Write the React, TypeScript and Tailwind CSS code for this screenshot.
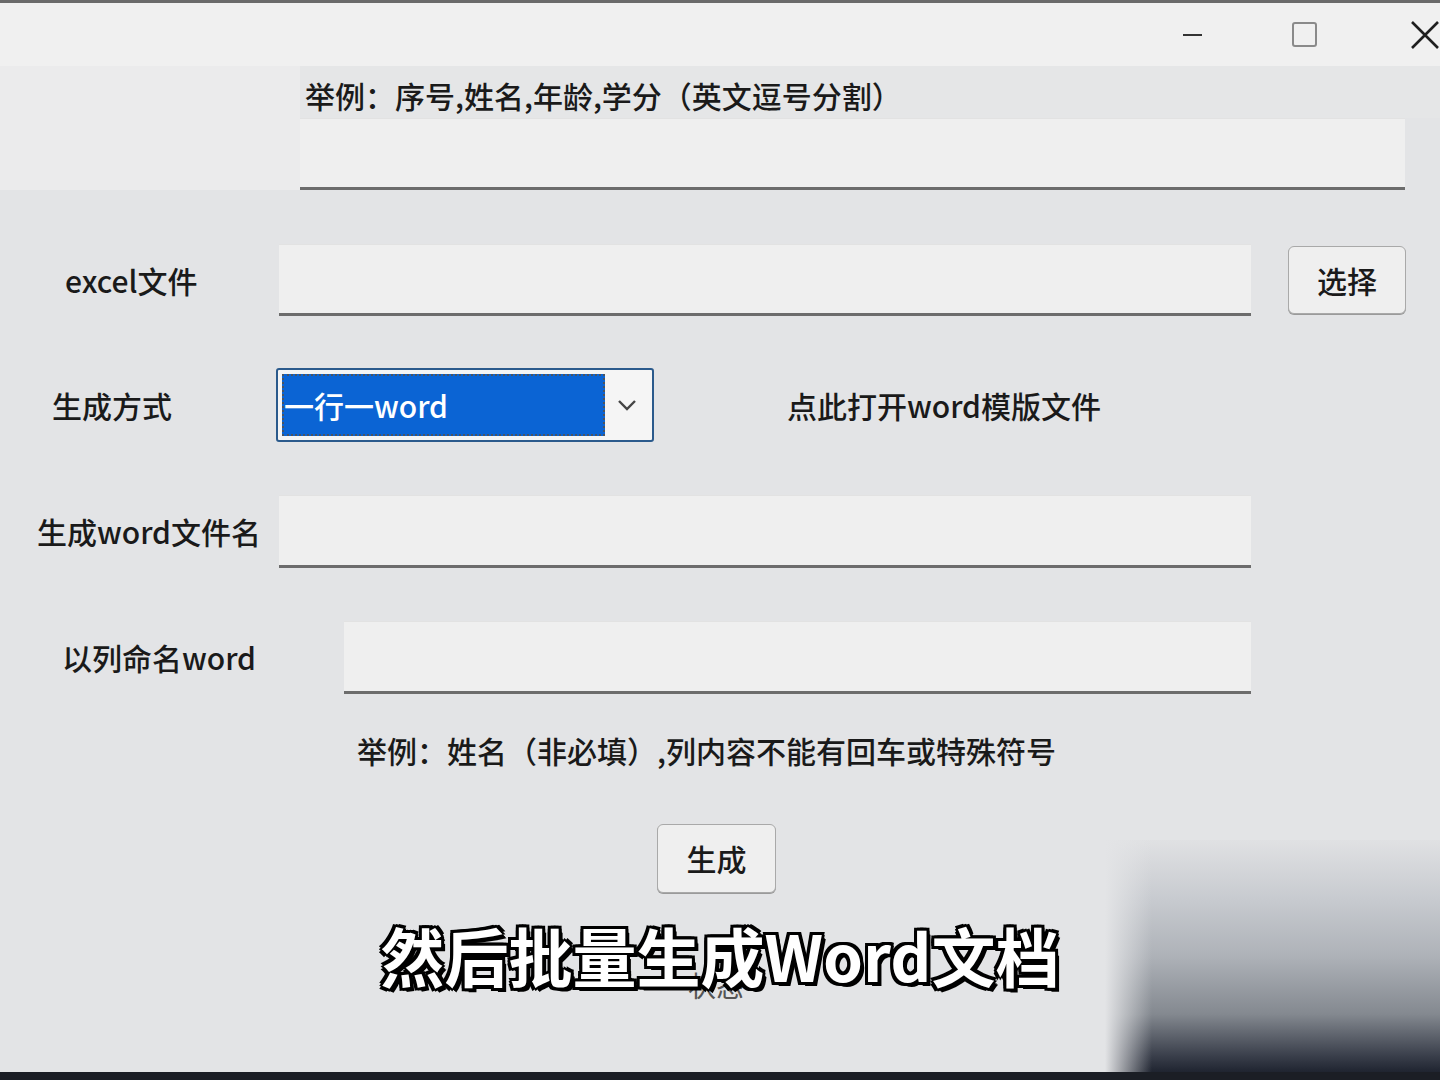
import React from "react";

const Field = ({ width }: { width: string }) => (
  <div
    className={`${width} h-full bg-[#efefef] border-t border-t-[#e2e2e2] border-b-[3px] border-b-[#6c6c6c]`}
  />
);

const App = () => {
  return (
    <div className="relative w-[1440px] h-[1080px] overflow-hidden flex flex-col bg-[#e3e4e6] text-[#1a1a1a] font-['Noto_Sans_CJK_SC','Noto_Sans',sans-serif]">
      {/* top edge */}
      <div className="h-[3px] bg-[#6a6a6a]" />

      {/* title bar */}
      <div className="h-[63px] bg-[#f0f0f0] flex items-center pl-[1183px]">
        <div className="w-[27px] h-[2px] bg-[#333]" />
        <div className="ml-[90px] w-[25px] h-[25px] shrink-0 border-2 border-[#8a8a8a] rounded-[3px]" />
        <svg
          className="ml-[93px] shrink-0"
          width="30"
          height="30"
          viewBox="0 0 30 30"
          fill="none"
        >
          <path d="M2 2L28 28M28 2L2 28" stroke="#1e1e1e" strokeWidth="2.6" />
        </svg>
      </div>

      {/* example + header field */}
      <div className="flex h-[124px]">
        <div className="w-[300px] bg-[#ebebec]" />
        <div className="flex-1 flex flex-col">
          <div className="h-[52px] flex items-center pl-[5px] pt-[6px] bg-[#e5e6e7]">
            <span className="text-[30px] font-medium">
              举例：序号,姓名,年龄,学分（英文逗号分割）
            </span>
          </div>
          <div className="h-[72px]">
            <Field width="w-[1105px]" />
          </div>
        </div>
      </div>

      {/* excel row */}
      <div className="mt-[54px] h-[72px] flex items-center">
        <div className="w-[279px] pl-[65px] text-[30px] font-medium">excel文件</div>
        <Field width="w-[972px]" />
        <button className="ml-[37px] w-[118px] h-[68px] rounded-md border border-[#a9a9a9] bg-[#efefef] text-[30px] font-medium shadow-[0_1px_0_#9a9a9a]">
          选择
        </button>
      </div>

      {/* mode row */}
      <div className="mt-[52px] h-[74px] flex items-center">
        <div className="w-[276px] pl-[52px] text-[30px] font-medium">生成方式</div>
        <div className="w-[378px] h-full flex items-stretch rounded-[3px] border-2 border-[#2b5a8c] bg-[#f5f5f5] p-[4px]">
          <div className="w-[323px] flex items-center bg-[#0b64d4] border-2 border-dotted border-[#4a5462] text-white text-[30px] font-medium leading-none">
            一行一word
          </div>
          <div className="flex-1 flex items-center justify-center">
            <svg width="22" height="14" viewBox="0 0 22 14" fill="none">
              <path d="M3 3L11 11L19 3" stroke="#444" strokeWidth="2.4" />
            </svg>
          </div>
        </div>
        <div className="ml-[133px] text-[30px] font-medium">点此打开word模版文件</div>
      </div>

      {/* file name row */}
      <div className="mt-[53px] h-[73px] flex items-center">
        <div className="w-[279px] pl-[37px] text-[30px] font-medium">生成word文件名</div>
        <Field width="w-[972px]" />
      </div>

      {/* name by column row */}
      <div className="mt-[53px] h-[73px] flex items-center">
        <div className="w-[344px] pl-[62px] text-[30px] font-medium">以列命名word</div>
        <Field width="w-[907px]" />
      </div>

      <div className="mt-[40px] h-[32px] flex items-center pl-[357px] text-[30px] font-medium">
        举例：姓名（非必填）,列内容不能有回车或特殊符号
      </div>

      <div className="mt-[58px] pl-[657px]">
        <button className="w-[119px] h-[69px] rounded-md border border-[#a9a9a9] bg-[#efefef] text-[30px] font-medium shadow-[0_1px_0_#9a9a9a]">
          生成
        </button>
      </div>

      <div className="mt-[76px] h-[32px] flex items-center pl-[688px] text-[28px] text-[#555]">
        状态
      </div>

      <div className="mt-auto h-[8px] bg-[#1b1e25]" />

      {/* blurred dark shape at bottom right */}
      <div className="absolute right-0 bottom-[8px] w-[335px] h-[232px] bg-[linear-gradient(to_right,#e3e4e6_0%,rgba(227,228,230,0)_14%),linear-gradient(to_bottom,#e0e1e3_0%,#c8cbd0_25%,#aeb2b8_50%,#848990_75%,#3a3f4b_93%,#1f2430_100%)]" />

      {/* video subtitle */}
      <div className="absolute inset-x-0 top-[922px] text-center text-[64px] font-bold leading-none text-white [text-shadow:3px_3px_0_#000,-3px_-3px_0_#000,3px_-3px_0_#000,-3px_3px_0_#000,3px_0_0_#000,-3px_0_0_#000,0_3px_0_#000,0_-3px_0_#000,4px_4px_0_#000]">
        然后批量生成Word文档
      </div>
    </div>
  );
};

export default App;
